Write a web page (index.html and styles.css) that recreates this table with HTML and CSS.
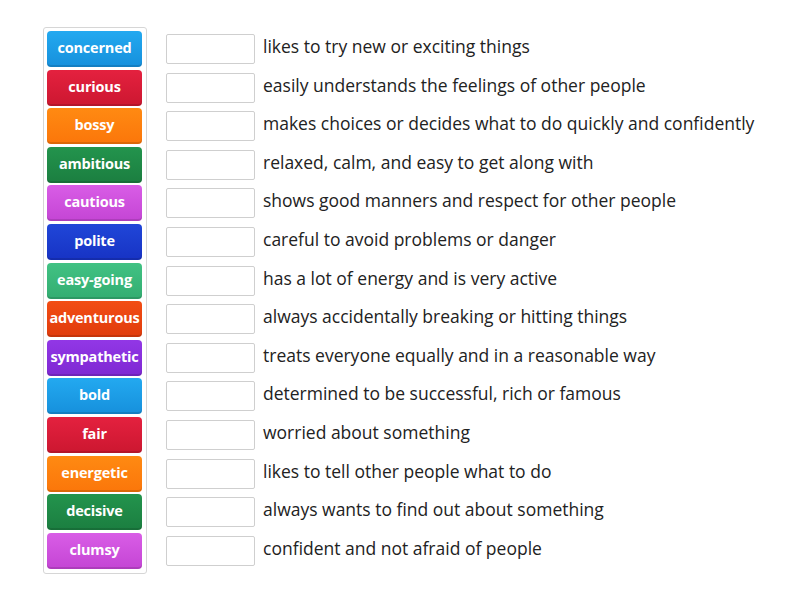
FILE: index.html
```html
<!DOCTYPE html>
<html>
<head>
<meta charset="utf-8">
<link rel="stylesheet" href="styles.css">
</head>
<body>
<div class="game">
  <div class="bank">
    <div class="tile c-blue">concerned</div>
    <div class="tile c-red">curious</div>
    <div class="tile c-orange">bossy</div>
    <div class="tile c-green">ambitious</div>
    <div class="tile c-pink">cautious</div>
    <div class="tile c-navy">polite</div>
    <div class="tile c-teal">easy-going</div>
    <div class="tile c-vermil">adventurous</div>
    <div class="tile c-purple">sympathetic</div>
    <div class="tile c-blue">bold</div>
    <div class="tile c-red">fair</div>
    <div class="tile c-orange">energetic</div>
    <div class="tile c-green">decisive</div>
    <div class="tile c-pink">clumsy</div>
  </div>
  <div class="rows">
    <div class="row"><div class="slot"></div><span class="def">likes to try new or exciting things</span></div>
    <div class="row"><div class="slot"></div><span class="def">easily understands the feelings of other people</span></div>
    <div class="row"><div class="slot"></div><span class="def">makes choices or decides what to do quickly and confidently</span></div>
    <div class="row"><div class="slot"></div><span class="def">relaxed, calm, and easy to get along with</span></div>
    <div class="row"><div class="slot"></div><span class="def">shows good manners and respect for other people</span></div>
    <div class="row"><div class="slot"></div><span class="def">careful to avoid problems or danger</span></div>
    <div class="row"><div class="slot"></div><span class="def">has a lot of energy and is very active</span></div>
    <div class="row"><div class="slot"></div><span class="def">always accidentally breaking or hitting things</span></div>
    <div class="row"><div class="slot"></div><span class="def">treats everyone equally and in a reasonable way</span></div>
    <div class="row"><div class="slot"></div><span class="def">determined to be successful, rich or famous</span></div>
    <div class="row"><div class="slot"></div><span class="def">worried about something</span></div>
    <div class="row"><div class="slot"></div><span class="def">likes to tell other people what to do</span></div>
    <div class="row"><div class="slot"></div><span class="def">always wants to find out about something</span></div>
    <div class="row"><div class="slot"></div><span class="def">confident and not afraid of people</span></div>
  </div>
</div>
</body>
</html>
```
FILE: styles.css
```css
html, body {
  margin: 0;
  padding: 0;
  background: #ffffff;
}
body {
  font-family: "Open Sans", "Noto Sans", sans-serif;
}
.game {
  display: flex;
  align-items: flex-start;
  padding: 27px 0 0 43px;
}
.bank {
  display: flex;
  flex-direction: column;
  gap: 2.6px;
  padding: 3px 4px 4px 3px;
  border: 1px solid #d6d6d6;
  border-radius: 3px;
  width: 95px;
}
.tile {
  height: 36px;
  box-sizing: border-box;
  padding-bottom: 3px;
  border-radius: 4px;
  color: #fff;
  font-weight: 700;
  font-size: 14.5px;
  display: flex;
  align-items: center;
  justify-content: center;
  white-space: nowrap;
  letter-spacing: -0.2px;
  box-shadow: inset 0 -2px 0 rgba(0,0,0,0.12);
}
.c-blue { background: linear-gradient(#23a9f0, #1690dc); }
.c-red { background: linear-gradient(#e4213f, #cc1730); }
.c-orange { background: linear-gradient(#ff8a12, #fb760a); }
.c-green { background: linear-gradient(#23944d, #1b7e40); }
.c-pink { background: linear-gradient(#d95de6, #c445d4); }
.c-navy { background: linear-gradient(#2046d8, #1733c4); }
.c-teal { background: linear-gradient(#41c283, #33ad71); }
.c-vermil { background: linear-gradient(#f24d14, #e03c0c); }
.c-purple { background: linear-gradient(#9237e6, #7e28d2); }
.rows {
  display: flex;
  flex-direction: column;
  margin-left: 19px;
  padding-top: 7px;
}
.row {
  height: 38.6px;
  display: flex;
  align-items: flex-start;
}
.slot {
  width: 87px;
  height: 28px;
  border: 1px solid #cfcfcf;
  border-radius: 2px;
  background: #fff;
  flex: none;
}
.def {
  margin-left: 8px;
  font-size: 17.5px;
  color: #222;
  line-height: 25px;
  white-space: nowrap;
}
```
